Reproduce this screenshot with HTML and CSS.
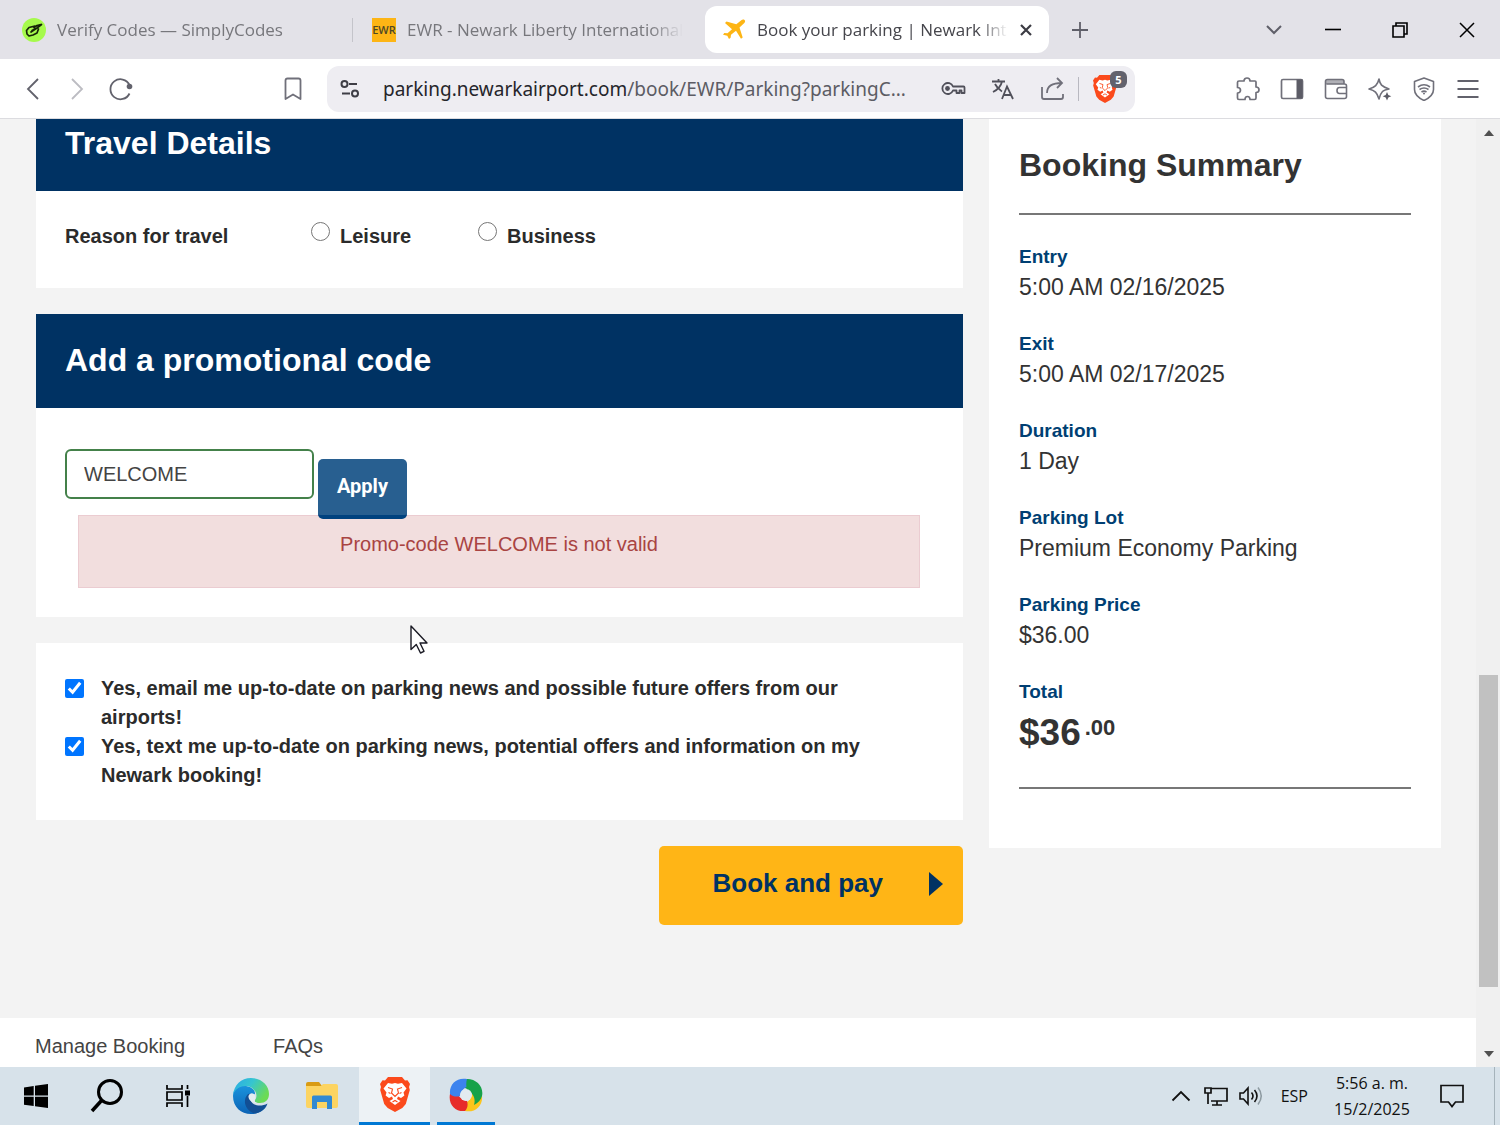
FILE: index.html
```html
<!DOCTYPE html>
<html lang="en">
<head>
  <meta charset="UTF-8">
  <title>Book your parking | Newark International</title>
  <link rel="stylesheet" href="styles.css">
</head>
<body>
  <svg class="defs" width="0" height="0">
    <symbol id="brave" viewBox="0 0 30 35">
      <path fill="#fb4a1c" d="M8 0h14l3 3.500 2.500-.3L30 7l-1 3 .8 3-4 14-3.500 4L15 35l-7.300-4-3.500-4-4-14L1 10 0 7l2.500-3.800L5 3.500z"/>
      <path fill="#fff" d="M15 6l3 .8 4-.9 4.500 5.600-3 4 .9 3-3.400 2.500-3-1.500-1 2.500 3.500 2-5.500 4-5.500-4 3.500-2-1-2.500-3 1.500L5.600 18.500l.9-3-3-4L8 5.900l4 .9z"/>
      <path fill="none" stroke="#fb4a1c" stroke-width="1.100" d="M8 10.500l4.500 1.500-1 4 3.500 3.500 3.500-3.500-1-4 4.500-1.500M8.500 15.500l2 1M21.500 15.500l-2 1M12.500 25l2.500-1.500 2.500 1.500"/>
    </symbol>
  </svg>

  <header class="browser">
    <div class="tabs">
      <div class="tab">
        <svg width="24" height="24" viewBox="0 0 24 24"><circle cx="12" cy="12" r="12" fill="#a6fa4c"/><path d="M13 8l-6 1.500-2.500 3L5 16l2 2 4-1 4-2 1.500-4M10 12.500l3-1.500M9 14l6-4 4.500-3.500M12 9.500l3-2 4-1" fill="none" stroke="#172408" stroke-width="1.700" stroke-linejoin="round" stroke-linecap="round"/></svg>
        <span class="tab-title">Verify Codes — SimplyCodes</span>
      </div>
      <span class="tab-line"></span>
      <div class="tab">
        <span class="ewr">EWR</span>
        <span class="tab-title">EWR - Newark Liberty International</span>
      </div>
      <div class="tab active">
        <svg width="24" height="24" viewBox="0 0 24 24"><path fill="#fdb515" d="M22.500 2c1.300 1 .4 2.500-.7 3.500L17.500 9.500l3.200 10-1.700 1.300-5-8-5 4-.4 3-1.600 1.200-1.700-3.300L1 16.800 2.300 15l3.200.3 4.500-4L3 5l1.500-1.500 9.800 2.800L19 2.500c1.200-.9 2.500-1.300 3.500-.5z"/></svg>
        <span class="tab-title">Book your parking | Newark Int</span>
        <button type="button" class="close-tab" aria-label="Close tab"><svg width="14" height="14" viewBox="0 0 14 14"><path d="M2 2l10 10M12 2L2 12" stroke="#3c3c44" stroke-width="2.200"/></svg></button>
      </div>
      <button type="button" class="new-tab" aria-label="New tab"><svg width="16" height="16" viewBox="0 0 16 16"><path d="M8 0v16M0 8h16" stroke="#5f5f69" stroke-width="1.800"/></svg></button>
      <div class="window-buttons">
        <button type="button" class="tab-search" aria-label="Search tabs"><svg width="16" height="10" viewBox="0 0 16 10"><path d="M1 1l7 7 7-7" fill="none" stroke="#5f5f69" stroke-width="2"/></svg></button>
        <button type="button" aria-label="Minimize"><svg width="16" height="16" viewBox="0 0 16 16"><path d="M0 7.500h16" stroke="#000" stroke-width="1.600"/></svg></button>
        <button type="button" aria-label="Restore"><svg width="16" height="16" viewBox="0 0 16 16"><path d="M1 4h11v11H1zM4 4V1h11v11h-3" fill="none" stroke="#000" stroke-width="1.600"/></svg></button>
        <button type="button" aria-label="Close"><svg width="16" height="16" viewBox="0 0 16 16"><path d="M1 1l14 14M15 1L1 15" stroke="#000" stroke-width="1.500"/></svg></button>
      </div>
    </div>

    <div class="toolbar">
      <button type="button" aria-label="Back"><svg width="24" height="24" viewBox="0 0 24 24"><path d="M17 2L7 12l10 10" fill="none" stroke="#62626c" stroke-width="1.800"/></svg></button>
      <button type="button" aria-label="Forward"><svg width="24" height="24" viewBox="0 0 24 24"><path d="M7 2l10 10L7 22" fill="none" stroke="#bcbcc2" stroke-width="1.800"/></svg></button>
      <button type="button" aria-label="Reload"><svg width="24" height="24" viewBox="0 0 24 24"><path d="M20.500 8A10 10 0 1 0 20.500 16.500" fill="none" stroke="#62626c" stroke-width="1.800"/><circle cx="20.500" cy="9.500" r="2.800" fill="#62626c"/></svg></button>
      <button type="button" class="bookmark" aria-label="Bookmark"><svg width="24" height="24" viewBox="0 0 24 24"><path d="M4.500 3.500q0-2 2-2h11q2 0 2 2v18.500L12 17.500 4.500 22z" fill="none" stroke="#70707a" stroke-width="1.800" stroke-linejoin="round"/></svg></button>
      <div class="omnibox">
        <button type="button" class="site-info" aria-label="Site information"><svg width="20" height="18" viewBox="0 0 20 18"><g fill="none" stroke="#3e3e46" stroke-width="2"><circle cx="4.500" cy="4" r="3"/><path d="M9 4h8M2 13.500h8"/><circle cx="15" cy="13.500" r="3"/></g></svg></button>
        <a href="#" class="url">parking.newarkairport.com<span>/book/EWR/Parking?parkingC...</span></a>
        <button type="button" aria-label="Passwords"><svg width="26" height="18" viewBox="0 0 26 18"><path d="M13 6.500h10.500q1 0 1 1v5.500h-3v-2.500h-2V13h-3v-2.500H13A5.500 5.500 0 1 1 13 6.500z" fill="none" stroke="#50505a" stroke-width="1.800" stroke-linejoin="round"/><circle cx="7.500" cy="8.500" r="2.400" fill="#50505a"/></svg></button>
        <button type="button" aria-label="Translate"><svg width="24" height="24" viewBox="0 0 24 24"><path d="M1 4.500h13M7.500 2v2.500M11 4.500C10 9 6 13 2 15M4 7c2 4 5 6 7 7.500M11 22l5-12.500L22 22M13 18h7" fill="none" stroke="#50505a" stroke-width="1.800"/></svg></button>
        <button type="button" aria-label="Share"><svg width="26" height="24" viewBox="0 0 26 24"><path d="M2 10v10q0 2 2 2h17q2 0 2-2v-3M7 16C7 9 12 6 22 6M17 1l5 5-5 5" fill="none" stroke="#70707a" stroke-width="1.800"/></svg></button>
        <span class="omni-line"></span>
        <button type="button" class="shields" aria-label="Brave Shields"><svg width="24" height="28"><use href="#brave"/></svg><span class="badge">5</span></button>
      </div>
      <button type="button" aria-label="Extensions"><svg width="24" height="24" viewBox="0 0 24 24"><path d="M3 4h5c0-4 6-4 6 0h5q1 0 1 1v5c4 0 4 5.500 0 5.500V21q0 1.500-1.500 1.500H14c0-4-5-4-5 0H3q-1.500 0-1.500-1.500v-5c4 0 4-5.500 0-5.500V5.500Q1.500 4 3 4z" fill="none" stroke="#70707a" stroke-width="1.700" stroke-linejoin="round"/></svg></button>
      <button type="button" aria-label="Sidebar"><svg width="24" height="24" viewBox="0 0 24 24"><rect x="1.500" y="2.500" width="21" height="19" rx="1.500" fill="none" stroke="#70707a" stroke-width="1.700"/><path d="M16.500 2.500h6v19h-6z" fill="#5c5c66"/></svg></button>
      <button type="button" aria-label="Wallet"><svg width="24" height="24" viewBox="0 0 24 24"><path d="M2 3h18v4H2z" fill="#b0b0b6"/><path d="M20 7V4.500Q20 2.500 18 2.500H3.500Q1.500 2.500 1.500 4.500v15q0 2 2 2h17q2 0 2-2V9q0-2-2-2h-18M22.500 10.500h-7q-2.500 0-2.500 3t2.500 3h7" fill="none" stroke="#70707a" stroke-width="1.600"/></svg></button>
      <button type="button" aria-label="Leo AI"><svg width="24" height="24" viewBox="0 0 24 24"><path d="M11 2c1 5.500 2.500 7.500 10 10-4 .8-5.500 1.500-6.500 2.500-2 2-2.500 3.500-3.500 7.500-2-6.500-4-8.500-10-10 6-1.500 8.500-4 10-10z" fill="none" stroke="#70707a" stroke-width="1.600" stroke-linejoin="round"/><path d="M19 15l1.300 3 3 1.300-3 1.300-1.300 3-1.300-3-3-1.300 3-1.300z" fill="#5c5c66"/></svg></button>
      <button type="button" aria-label="VPN"><svg width="24" height="24" viewBox="0 0 24 24"><path d="M12 1l9.500 3.500v8Q21.500 19 12 23.500 2.500 19 2.500 12.500v-8zM6 10q6-4.500 12 0M7.500 12.500q4.500-3 9 0M9.500 15q2.500-1.800 5 0" fill="none" stroke="#70707a" stroke-width="1.600" stroke-linejoin="round"/><circle cx="12" cy="16.500" r="1" fill="#70707a"/></svg></button>
      <button type="button" aria-label="Menu"><svg width="24" height="24" viewBox="0 0 24 24"><path d="M1.500 4h21M1.500 12h21M1.500 20h21" stroke="#62626c" stroke-width="1.800"/></svg></button>
    </div>
  </header>

  <div class="viewport">
    <div class="page">
      <div class="columns">
        <main>
          <section class="card">
            <h2>Travel Details</h2>
            <div class="travel">
              <span class="reason">Reason for travel</span>
              <label><input type="radio" name="reason"> Leisure</label>
              <label><input type="radio" name="reason"> Business</label>
            </div>
          </section>

          <section class="card">
            <h2>Add a promotional code</h2>
            <div class="promo">
              <div class="promo-row">
                <input type="text" value="WELCOME" aria-label="Promotional code">
                <button type="button">Apply</button>
              </div>
              <div class="alert">Promo-code WELCOME is not valid</div>
            </div>
          </section>

          <section class="card consent">
            <label><input type="checkbox" checked><span>Yes, email me up-to-date on parking news and possible future offers from our airports!</span></label>
            <label><input type="checkbox" checked><span>Yes, text me up-to-date on parking news, potential offers and information on my Newark booking!</span></label>
          </section>

          <button type="button" class="book">Book and pay <svg width="14" height="24" viewBox="0 0 14 24"><path d="M0 0l14 12L0 24z" fill="#003263"/></svg></button>
        </main>

        <aside>
          <h2>Booking Summary</h2>
          <dl>
            <dt>Entry</dt>
            <dd>5:00 AM 02/16/2025</dd>
            <dt>Exit</dt>
            <dd>5:00 AM 02/17/2025</dd>
            <dt>Duration</dt>
            <dd>1 Day</dd>
            <dt>Parking Lot</dt>
            <dd>Premium Economy Parking</dd>
            <dt>Parking Price</dt>
            <dd>$36.00</dd>
            <dt>Total</dt>
            <dd class="total">$36<span>.00</span></dd>
          </dl>
        </aside>
      </div>

      <footer>
        <a href="#">Manage Booking</a>
        <a href="#">FAQs</a>
      </footer>
    </div>

    <div class="scrollbar">
      <svg width="10" height="6" viewBox="0 0 10 6"><path d="M0 6l5-6 5 6z" fill="#505050"/></svg>
      <span class="before"></span>
      <span class="thumb"></span>
      <span class="after"></span>
      <svg width="10" height="6" viewBox="0 0 10 6"><path d="M0 0l5 6 5-6z" fill="#505050"/></svg>
    </div>
  </div>

  <nav class="taskbar">
    <button type="button" aria-label="Start"><svg width="24" height="24" viewBox="0 0 24 24"><path d="M0 3.500L9.700 2v9.500H0zM11 1.800L24 0v11.500H11zM0 12.800h9.700V22L0 20.700zM11 12.800h13V24l-13-1.800z"/></svg></button>
    <button type="button" aria-label="Search"><svg width="34" height="34" viewBox="0 0 34 34"><circle cx="20" cy="13" r="11.500" fill="none" stroke="#000" stroke-width="3"/><path d="M12 21L2 32" stroke="#000" stroke-width="3.500"/></svg></button>
    <button type="button" aria-label="Task View"><svg width="26" height="24" viewBox="0 0 26 24"><path d="M2 1v4h15V1M2 23v-4h15v4M2 8h15v8H2zM22.500 1v4M22.500 12v11" fill="none" stroke="#000" stroke-width="1.700"/><path d="M20 6.500h5v5h-5z"/></svg></button>
    <button type="button" class="edge" aria-label="Microsoft Edge">
      <svg width="36" height="36" viewBox="0 0 36 36">
        <defs>
          <linearGradient id="edge-top" x1="0" y1="0" x2="1" y2=".5"><stop offset="0" stop-color="#29a9e8"/><stop offset=".5" stop-color="#36c5d0"/><stop offset="1" stop-color="#6bdb55"/></linearGradient>
          <linearGradient id="edge-low" x1="0" y1="0" x2="0" y2="1"><stop offset="0" stop-color="#1a93dd"/><stop offset="1" stop-color="#0c63b5"/></linearGradient>
        </defs>
        <path fill="url(#edge-low)" d="M0 18C0 11 6 7 13 8c6 1 9 4 9 8-6 2-8 8-4 13 4 5 12 4 16-2-3 6-9 9-16 9C8 36 0 29 0 18z"/>
        <path fill="#124f94" d="M15 16c-6 6-3 17 7 19.500 6-1 11-5 12.500-10-7 4-16 2-17-4-.4-3 .5-4.500 2-6z"/>
        <path fill="url(#edge-top)" d="M0 17C1 7 8 0 18 0s18 7 18 16c0 6-4 9-9 9-4 0-6-1-5-3 3-4 1-9-3-12C13 6 3 8 0 17z"/>
        <path fill="#e3edf2" d="M15.500 18c1-3 3.500-3.500 5.500-2 1.500 2 1.500 4 .8 6-.6 1.500.7 2.700 3.200 3-5 .6-10-2.500-9.500-7z"/>
      </svg>
    </button>
    <button type="button" aria-label="File Explorer"><svg width="32" height="28" viewBox="0 0 32 28"><path fill="#d99b14" d="M0 2q0-2 2-2h11l3 4H0z"/><path fill="#fcd462" d="M0 4h15l2-2h13q2 0 2 2v20q0 2-2 2H2q-2 0-2-2z"/><path fill="#3289d2" d="M6 27V15q0-1.500 1.500-1.500h17Q26 13.500 26 15v12h-5v-7H11v7z"/></svg></button>
    <button type="button" class="current" aria-label="Brave"><svg width="30" height="35"><use href="#brave"/></svg></button>
    <button type="button" class="running" aria-label="ShareX">
      <svg width="34" height="34" viewBox="0 0 34 34">
        <defs><path id="blade" d="M1 16C0 6 8-1 18 1c4 1 7 4 9 8-8-3-14 1-16 9-3 1-7 1-10-2z"/></defs>
        <path fill="#17a24a" d="M15 1.500A16 16 0 0 1 32 22l-8 1V13l-8-3z"/>
        <use href="#blade" fill="#fcc51b" transform="rotate(180 17 17)"/>
        <use href="#blade" fill="#e72c2a" transform="rotate(270 17 17)"/>
        <use href="#blade" fill="#3c83ee"/>
        <path fill="#17a24a" d="M18 1c10 0 17 8 15 17-1 4-4 7-8 9 2-7-1-12-7-15-1-4-1-8 0-11z"/>
        <circle cx="17" cy="17" r="6" fill="#e3eaf0"/>
      </svg>
    </button>
    <div class="tray">
      <button type="button" aria-label="Show hidden icons"><svg width="20" height="12" viewBox="0 0 20 12"><path d="M1.500 10.500L10 2l8.500 8.500" fill="none" stroke="#111" stroke-width="1.800"/></svg></button>
      <button type="button" aria-label="Network"><svg width="24" height="22" viewBox="0 0 24 22"><path d="M7 3.500h16V16H7M1 3h6v5H1zM4 8v11M8 20h10M13 16v4" fill="none" stroke="#111" stroke-width="1.700"/></svg></button>
      <button type="button" aria-label="Volume"><svg width="24" height="20" viewBox="0 0 24 20"><path d="M1 7h3.500L9 2v16l-4.500-5H1zM12.500 6.500q3 3.500 0 7M15.500 4q5 6 0 12" fill="none" stroke="#111" stroke-width="1.600"/><path d="M19 1.500q6.500 8.500 0 17" fill="none" stroke="#8d9aa1" stroke-width="1.500"/></svg></button>
      <span class="lang">ESP</span>
      <time class="clock">5:56 a. m.<br>15/2/2025</time>
      <button type="button" class="action" aria-label="Notifications"><svg width="24" height="24" viewBox="0 0 24 24"><path d="M1 1.500h22V18h-7.500L12 22.500 8.500 18H1z" fill="none" stroke="#111" stroke-width="1.700"/></svg></button>
      <span class="show-desktop"></span>
    </div>
  </nav>

  <svg class="cursor" width="18" height="30" viewBox="0 0 18 30"><path d="M1 1v23.500l5.300-5 4.200 8.500 3.500-1.700-4-8.300h7z" fill="#fff" stroke="#1a1a24" stroke-width="1.400" stroke-linejoin="round"/></svg>
</body>
</html>
```

FILE: styles.css
```css
* {
  box-sizing: border-box;
}
body {
  margin: 0;
  height: 100vh;
  display: flex;
  flex-direction: column;
  overflow: hidden;
  font-family: "Liberation Sans", Arial, sans-serif;
  font-size: 20px;
  color: #333;
}
button {
  padding: 0;
  border: 0;
  background: none;
  font-family: inherit;
}
a {
  color: inherit;
  text-decoration: none;
}
svg {
  display: block;
  flex: none;
}
.defs {
  position: absolute;
}

/* browser chrome */
.browser {
  font-family: "Open Sans", "Segoe UI", sans-serif;
  border-bottom: 1px solid #dcdce0;
}
.tabs {
  height: 59px;
  padding-left: 5px;
  display: flex;
  align-items: center;
  background-color: #e3e2e8;
}
.tab {
  width: 344px;
  height: 47px;
  padding: 0 16px 0 17px;
  display: flex;
  align-items: center;
  gap: 11px;
  border-radius: 12px;
  font-size: 17px;
  color: #77777c;
}
.tab.active {
  margin-left: 6px;
  background-color: #fff;
  color: #46464c;
}
.tab-title {
  flex: 1;
  min-width: 0;
  white-space: nowrap;
  -webkit-mask-image: linear-gradient(to right, #000 88%, transparent);
  mask-image: linear-gradient(to right, #000 88%, transparent);
}
.tab-line {
  width: 1px;
  height: 24px;
  margin: 0 2px 0 3px;
  background-color: #c4c4ca;
}
.ewr {
  width: 24px;
  line-height: 24px;
  background-color: #fdb515;
  color: #4d4826;
  font-size: 11px;
  font-weight: 600;
  text-align: center;
}
.new-tab {
  margin-left: 23px;
}
.window-buttons {
  margin-left: auto;
  display: flex;
}
.window-buttons button {
  width: 67px;
  display: flex;
  align-items: center;
  justify-content: center;
}
.window-buttons .tab-search {
  width: 50px;
}
.toolbar {
  height: 59px;
  padding: 0 10px 0 11px;
  display: flex;
  align-items: center;
  background-color: #fff;
}
.toolbar button {
  width: 44px;
  height: 44px;
  display: flex;
  align-items: center;
  justify-content: center;
}
.toolbar .bookmark {
  margin: 0 12px 0 128px;
}
.omnibox {
  flex: 1;
  height: 46px;
  margin-right: 91px;
  padding-right: 8px;
  display: flex;
  align-items: center;
  border-radius: 12px;
  background-color: #eeedf2;
}
.omnibox button {
  width: 50px;
}
.omnibox .site-info {
  width: 46px;
}
.url {
  flex: 1;
  padding-left: 10px;
  font-family: "Noto Sans", "Segoe UI", sans-serif;
  font-size: 19px;
  color: #25252b;
  white-space: nowrap;
}
.url span {
  color: #5c5c64;
}
.omni-line {
  width: 1px;
  height: 24px;
  background-color: #b8b8c0;
}
.omnibox .shields {
  width: 48px;
  padding-left: 3px;
  justify-content: center;
  position: relative;
}
.badge {
  position: absolute;
  top: 4px;
  right: 0;
  width: 17px;
  height: 17px;
  border-radius: 6px;
  background-color: #62626d;
  color: #fff;
  font-size: 11px;
  line-height: 17px;
  font-weight: bold;
}

/* booking page */
.viewport {
  flex: 1;
  min-height: 0;
  display: flex;
  overflow: hidden;
}
.page {
  flex: 1;
  display: flex;
  flex-direction: column;
  /* scrolled part way into the first card */
  margin-top: -22px;
  background-color: #f3f3f3;
}
.columns {
  padding: 0 35px 93px 36px;
  display: grid;
  grid-template-columns: 1fr 452px;
  gap: 26px;
  align-items: start;
}
main {
  display: flex;
  flex-direction: column;
  gap: 26px;
}
.card {
  background-color: #fff;
}
h2 {
  margin: 0;
  font-size: 32px;
  line-height: 36px;
}
.card h2 {
  padding: 28px 29px 30px;
  background-color: #003263;
  color: #fff;
}
.travel {
  height: 97px;
  padding: 30px 29px;
  display: flex;
  line-height: 30px;
  font-weight: bold;
  color: #2b2b2b;
}
.reason {
  width: 246px;
}
.travel label {
  width: 167px;
  display: flex;
  gap: 10px;
}
.travel input {
  width: 19px;
  height: 19px;
  margin: 1px 0 0;
}
.promo {
  padding: 41px 29px 29px;
}
.promo-row {
  display: flex;
  align-items: flex-start;
  gap: 4px;
}
.promo-row input {
  width: 249px;
  height: 50px;
  padding: 0 17px;
  border: 2px solid #44814a;
  border-radius: 6px;
  font-family: inherit;
  font-size: 20px;
  color: #444;
}
.promo-row button {
  position: relative;
  width: 89px;
  height: 60px;
  margin-top: 10px;
  padding-bottom: 2px;
  border-bottom: 4px solid #00427f;
  border-radius: 5px;
  background-color: #285f90;
  color: #fff;
  font-family: Roboto, sans-serif;
  font-size: 20px;
  font-weight: bold;
}
.alert {
  height: 73px;
  margin: -4px 14px 0 13px;
  padding-top: 14px;
  border: 1px solid #ebccd1;
  background-color: #f2dede;
  color: #a94442;
  line-height: 28px;
  text-align: center;
}
.consent {
  padding: 31px 58px 30px 29px;
  font-weight: bold;
  line-height: 29px;
  color: #2b2b2b;
}
.consent label {
  display: flex;
  gap: 17px;
}
.consent input {
  flex: none;
  width: 19px;
  height: 19px;
  margin: 5px 0 0;
}
.book {
  align-self: flex-end;
  height: 79px;
  padding: 0 20px 4px 54px;
  display: flex;
  align-items: center;
  gap: 46px;
  border-radius: 5px;
  background-color: #ffb516;
  color: #003263;
  font-size: 26px;
  font-weight: bold;
}
aside {
  padding: 50px 30px 59px;
  background-color: #fff;
}
aside h2 {
  padding-bottom: 30px;
}
dl {
  margin: 0;
  padding: 27px 0 28px;
  border-top: 2px solid #777;
  border-bottom: 2px solid #777;
}
dt {
  color: #003f73;
  font-size: 19px;
  line-height: 30px;
  font-weight: bold;
}
dd {
  margin: 0 0 27px;
  font-size: 23px;
  line-height: 30px;
}
.total {
  margin: 0;
  display: flex;
  gap: 4px;
  font-size: 37px;
  line-height: 52px;
  font-weight: bold;
}
.total span {
  font-size: 22px;
  line-height: 42px;
}
footer {
  flex: 1;
  padding: 14px 35px;
  display: flex;
  gap: 88px;
  background-color: #fff;
  line-height: 29px;
  color: #444;
}
.scrollbar {
  width: 24px;
  padding: 11px 2px 10px 3px;
  display: flex;
  flex-direction: column;
  align-items: center;
  background-color: #f0f0f0;
}
.scrollbar .before {
  flex: 538;
}
.scrollbar .thumb {
  flex: 312;
  width: 100%;
  background-color: #c1c1c1;
}
.scrollbar .after {
  flex: 64;
}

/* windows taskbar */
.taskbar {
  height: 58px;
  display: flex;
  background-color: #d7e2ea;
  font-family: "Open Sans", "Segoe UI", sans-serif;
  color: #111;
}
.taskbar button {
  width: 71px;
  display: flex;
  align-items: center;
  justify-content: center;
}
.taskbar .edge {
  margin-left: 2px;
}
.taskbar .current {
  margin: 0 7px 0 2px;
  border-bottom: 3px solid #0078d4;
  background-color: #edf2f5;
}
.taskbar .running {
  width: 58px;
  border-bottom: 3px solid #0078d4;
}
.tray {
  margin-left: auto;
  display: flex;
  align-items: center;
}
.taskbar .tray button {
  width: 35px;
}
.lang {
  margin-left: 12px;
  font-size: 16px;
}
.clock {
  width: 128px;
  font-size: 16px;
  line-height: 26px;
  text-align: center;
}
.taskbar .tray .action {
  width: 32px;
  margin-right: 26px;
}
.show-desktop {
  width: 6px;
  height: 58px;
  border-left: 1px solid #a5b3bb;
}

.cursor {
  position: absolute;
  left: 410px;
  top: 625px;
}
```
